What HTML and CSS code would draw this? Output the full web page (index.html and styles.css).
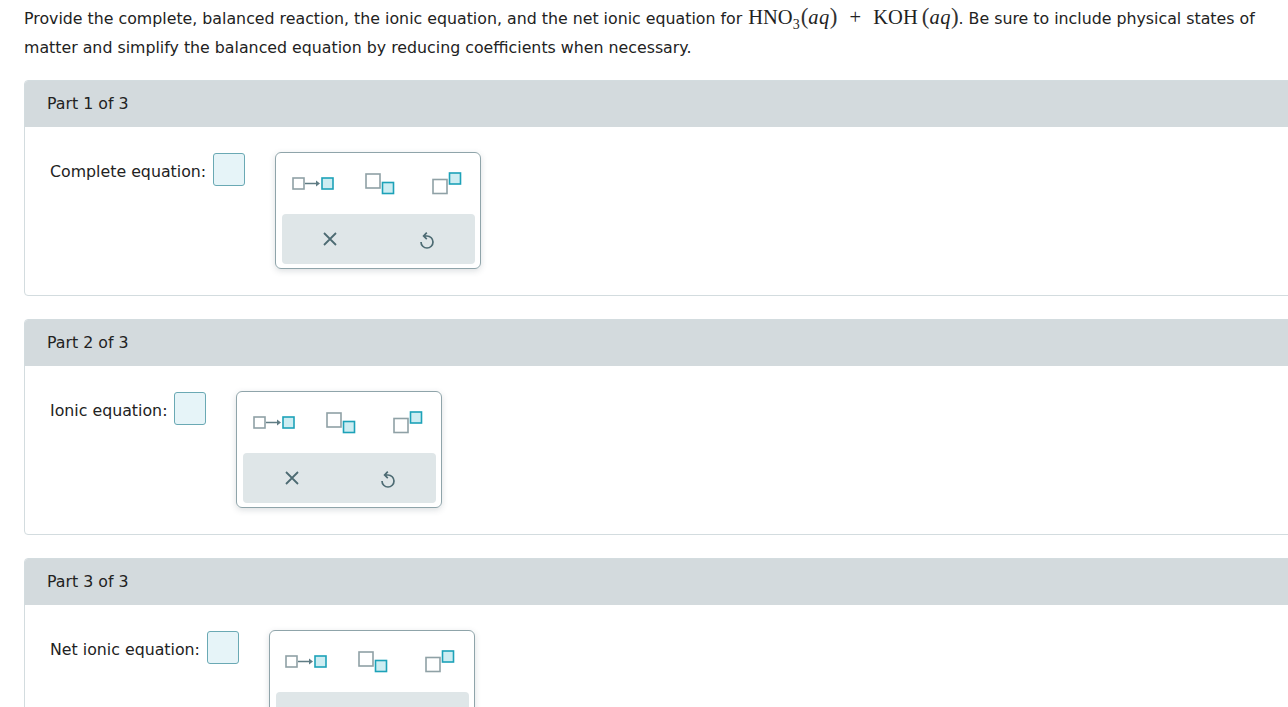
FILE: index.html
```html
<!DOCTYPE html>
<html>
<head>
<meta charset="utf-8">
<link rel="stylesheet" href="styles.css">
</head>
<body>
<div class="page">
  <p class="prompt">Provide the complete, balanced reaction, the ionic equation, and the net ionic equation for <span class="math">HNO<sub>3</sub><span class="paren">(</span><i>aq</i><span class="paren">)</span> <span class="op">+</span> KOH<span class="sp"></span><span class="paren">(</span><i>aq</i><span class="paren">)</span></span>. Be sure to include physical states of matter and simplify the balanced equation by reducing coefficients when necessary.</p>

  <section class="card">
    <div class="card-head">Part 1 of 3</div>
    <div class="card-body">
      <div class="field"><span class="label">Complete equation:</span><span class="answer"></span></div>
      <div class="palette">
        <div class="tools">
          <span class="tool"><svg width="42" height="14" viewBox="0 0 42 14"><rect x="1" y="1" width="11" height="11" fill="#fff" stroke="#8fa1a6" stroke-width="1.6"/><path d="M13 6.5H25" stroke="#5f7c84" stroke-width="1.6"/><path d="M24 3.5L28 6.5L24 9.5Z" fill="#5f7c84"/><rect x="30" y="1" width="11" height="11" fill="#cdedf2" stroke="#1da2b8" stroke-width="1.6"/></svg></span>
          <span class="tool"><svg width="30" height="22" viewBox="0 0 30 22"><rect x="1" y="1" width="14" height="14" fill="#fff" stroke="#8fa1a6" stroke-width="1.6"/><rect x="17.5" y="9.5" width="11" height="11" fill="#cdedf2" stroke="#1da2b8" stroke-width="1.6"/></svg></span>
          <span class="tool"><svg width="30" height="23" viewBox="0 0 30 23"><rect x="1" y="7.5" width="14" height="14" fill="#fff" stroke="#8fa1a6" stroke-width="1.6"/><rect x="17.5" y="1" width="11" height="11" fill="#cdedf2" stroke="#1da2b8" stroke-width="1.6"/></svg></span>
        </div>
        <div class="actions">
          <span class="act"><svg width="16" height="16" viewBox="0 0 16 16"><path d="M2 2L14 14M14 2L2 14" stroke="#4d6b73" stroke-width="1.8"/></svg></span>
          <span class="act"><svg width="16" height="19" viewBox="0 0 16 19"><path d="M8 6A6 6 0 1 1 2 12" fill="none" stroke="#4d6b73" stroke-width="1.7"/><path d="M8 6H5M7.8 2.6L4.6 6L7.8 9.2" fill="none" stroke="#4d6b73" stroke-width="1.7"/></svg></span>
        </div>
      </div>
    </div>
  </section>

  <section class="card">
    <div class="card-head">Part 2 of 3</div>
    <div class="card-body">
      <div class="field"><span class="label">Ionic equation:</span><span class="answer"></span></div>
      <div class="palette">
        <div class="tools">
          <span class="tool"><svg width="42" height="14" viewBox="0 0 42 14"><rect x="1" y="1" width="11" height="11" fill="#fff" stroke="#8fa1a6" stroke-width="1.6"/><path d="M13 6.5H25" stroke="#5f7c84" stroke-width="1.6"/><path d="M24 3.5L28 6.5L24 9.5Z" fill="#5f7c84"/><rect x="30" y="1" width="11" height="11" fill="#cdedf2" stroke="#1da2b8" stroke-width="1.6"/></svg></span>
          <span class="tool"><svg width="30" height="22" viewBox="0 0 30 22"><rect x="1" y="1" width="14" height="14" fill="#fff" stroke="#8fa1a6" stroke-width="1.6"/><rect x="17.5" y="9.5" width="11" height="11" fill="#cdedf2" stroke="#1da2b8" stroke-width="1.6"/></svg></span>
          <span class="tool"><svg width="30" height="23" viewBox="0 0 30 23"><rect x="1" y="7.5" width="14" height="14" fill="#fff" stroke="#8fa1a6" stroke-width="1.6"/><rect x="17.5" y="1" width="11" height="11" fill="#cdedf2" stroke="#1da2b8" stroke-width="1.6"/></svg></span>
        </div>
        <div class="actions">
          <span class="act"><svg width="16" height="16" viewBox="0 0 16 16"><path d="M2 2L14 14M14 2L2 14" stroke="#4d6b73" stroke-width="1.8"/></svg></span>
          <span class="act"><svg width="16" height="19" viewBox="0 0 16 19"><path d="M8 6A6 6 0 1 1 2 12" fill="none" stroke="#4d6b73" stroke-width="1.7"/><path d="M8 6H5M7.8 2.6L4.6 6L7.8 9.2" fill="none" stroke="#4d6b73" stroke-width="1.7"/></svg></span>
        </div>
      </div>
    </div>
  </section>

  <section class="card">
    <div class="card-head">Part 3 of 3</div>
    <div class="card-body">
      <div class="field"><span class="label">Net ionic equation:</span><span class="answer"></span></div>
      <div class="palette">
        <div class="tools">
          <span class="tool"><svg width="42" height="14" viewBox="0 0 42 14"><rect x="1" y="1" width="11" height="11" fill="#fff" stroke="#8fa1a6" stroke-width="1.6"/><path d="M13 6.5H25" stroke="#5f7c84" stroke-width="1.6"/><path d="M24 3.5L28 6.5L24 9.5Z" fill="#5f7c84"/><rect x="30" y="1" width="11" height="11" fill="#cdedf2" stroke="#1da2b8" stroke-width="1.6"/></svg></span>
          <span class="tool"><svg width="30" height="22" viewBox="0 0 30 22"><rect x="1" y="1" width="14" height="14" fill="#fff" stroke="#8fa1a6" stroke-width="1.6"/><rect x="17.5" y="9.5" width="11" height="11" fill="#cdedf2" stroke="#1da2b8" stroke-width="1.6"/></svg></span>
          <span class="tool"><svg width="30" height="23" viewBox="0 0 30 23"><rect x="1" y="7.5" width="14" height="14" fill="#fff" stroke="#8fa1a6" stroke-width="1.6"/><rect x="17.5" y="1" width="11" height="11" fill="#cdedf2" stroke="#1da2b8" stroke-width="1.6"/></svg></span>
        </div>
        <div class="actions">
          <span class="act"><svg width="16" height="16" viewBox="0 0 16 16"><path d="M2 2L14 14M14 2L2 14" stroke="#4d6b73" stroke-width="1.8"/></svg></span>
          <span class="act"><svg width="16" height="19" viewBox="0 0 16 19"><path d="M8 6A6 6 0 1 1 2 12" fill="none" stroke="#4d6b73" stroke-width="1.7"/><path d="M8 6H5M7.8 2.6L4.6 6L7.8 9.2" fill="none" stroke="#4d6b73" stroke-width="1.7"/></svg></span>
        </div>
      </div>
    </div>
  </section>
</div>
</body>
</html>
```

FILE: styles.css
```css
html, body {
  margin: 0;
  padding: 0;
  background: #fff;
  overflow: hidden;
}
body {
  font-family: "DejaVu Sans", Verdana, sans-serif;
  font-size: 15.8px;
  color: #222;
}
.page {
  padding: 4px 0 0 24px;
}
.prompt {
  margin: 0 0 18px 0;
  line-height: 29px;
  width: 1248px;
}
.math {
  font-family: "Liberation Serif", "DejaVu Serif", serif;
  font-size: 20.5px;
  line-height: 1;
  white-space: nowrap;
  margin-left: 1px;
}
.math sub {
  font-size: 14px;
  vertical-align: -5px;
  line-height: 0;
  margin-right: 1px;
}
.math .paren {
  font-size: 23px;
  color: #333;
}
.math i {
  font-style: italic;
  letter-spacing: 0.5px;
}
.math .op {
  margin: 0 7px;
}
.math .sp {
  display: inline-block;
  width: 4px;
}
.card {
  border: 1px solid #d3dcdf;
  border-radius: 4px;
  margin: 0 -30px 23px 0;
  overflow: hidden;
}
.card-head {
  background: #d3dadd;
  height: 46px;
  line-height: 46px;
  padding-left: 22px;
}
.card-body {
  display: flex;
  align-items: flex-start;
  padding: 25px 0 26px 25px;
}
.field {
  display: flex;
  align-items: center;
  margin-top: 1px;
  gap: 7px;
}
.label {
  font-size: 15.8px;
  padding-top: 3px;
}
.answer {
  display: block;
  width: 30px;
  height: 31px;
  background: #e6f4f8;
  border: 1.5px solid #6aa9b4;
  border-radius: 3px;
}
.palette {
  margin-left: 30px;
  border: 1px solid #8fa4aa;
  border-radius: 6px;
  box-shadow: 0 2px 6px rgba(60, 80, 90, 0.18);
  padding: 0 5px 4px 6px;
  box-sizing: border-box;
  width: 206px;
}
.tools {
  display: grid;
  grid-template-columns: 67px 67px 67px;
  height: 61px;
  align-items: center;
  margin-left: -3px;
}
.tool {
  display: flex;
  justify-content: center;
  align-items: center;
}
.tool svg {
  display: block;
}
.actions {
  display: grid;
  grid-template-columns: 1fr 1fr;
  height: 50px;
  background: #dfe6e8;
  border-radius: 4px;
  align-items: center;
}
.act {
  display: flex;
  justify-content: center;
  align-items: center;
}
.act svg {
  display: block;
}
```
